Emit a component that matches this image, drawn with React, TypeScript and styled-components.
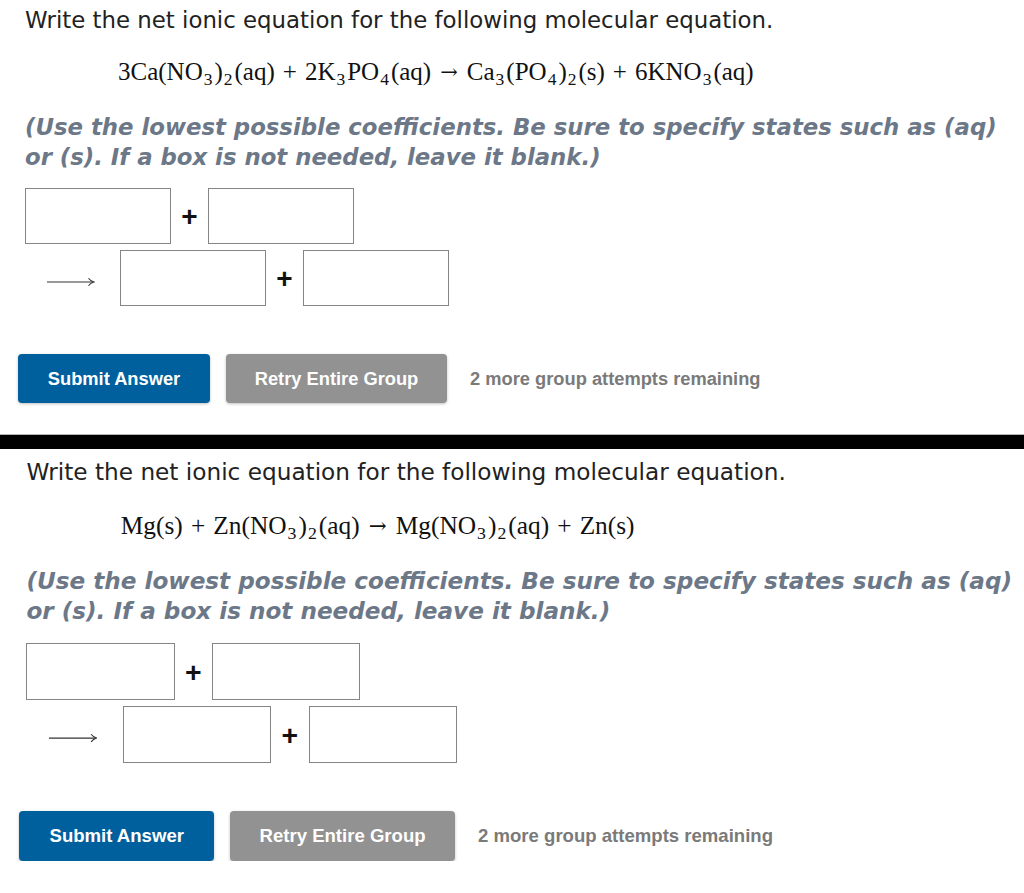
import React from "react";
import styled, { createGlobalStyle } from "styled-components";

const Global = createGlobalStyle`
  html, body { margin: 0; padding: 0; background: #ffffff; }
  body { font-family: "DejaVu Sans", Verdana, sans-serif; color: #222; }
`;

const Page = styled.div`
  width: 1024px;
  display: flex;
  flex-direction: column;
`;

const Section = styled.section<{ $zoom: number; $padTop: number; $padLeft: number }>`
  zoom: ${(p) => p.$zoom};
  padding: ${(p) => p.$padTop}px 0 0 ${(p) => p.$padLeft}px;
  display: flex;
  flex-direction: column;
`;

const Prompt = styled.div`
  font-family: "DejaVu Sans", Verdana, sans-serif;
  font-size: 22.85px;
  line-height: 28px;
  color: #222;
  white-space: nowrap;
`;

const Equation = styled.div`
  margin-top: 23px;
  height: 30px;
  padding-left: 93px;
  font-family: "Liberation Serif", "Times New Roman", serif;
  font-size: 25px;
  line-height: 30px;
  color: #111;
  white-space: nowrap;
`;

const Sub = styled.sub`
  font-size: 0.7em;
  line-height: 0;
  vertical-align: -0.28em;
  margin: 0 2px 0 1px;
`;

const Op = styled.span`
  margin: 0 8px;
`;

const Rel = styled.span`
  margin: 0 9px;
  font-family: "DejaVu Serif", serif;
  font-size: 21px;
  position: relative;
  top: -1px;
`;

const Instructions = styled.div`
  margin-top: 25px;
  font-family: "DejaVu Sans", Verdana, sans-serif;
  font-weight: bold;
  font-style: italic;
  font-size: 22.8px;
  line-height: 30px;
  color: #6c7888;
  width: 995px;
`;

const Answer = styled.div`
  margin-top: 16px;
  display: flex;
  flex-direction: column;
  gap: 6px;
`;

const BoxRow = styled.div<{ $indent: number }>`
  display: flex;
  align-items: center;
  padding-left: ${(p) => p.$indent}px;
`;

const InputBox = styled.div`
  width: 144px;
  height: 54px;
  border: 1px solid #858585;
  background: #fff;
`;

const Plus = styled.span`
  width: 37px;
  text-align: center;
  font-family: "Liberation Sans", Arial, sans-serif;
  font-weight: bold;
  font-size: 28px;
  line-height: 28px;
  color: #111;
  padding-top: 2px;
`;

const ArrowWrap = styled.span`
  width: 48px;
  height: 12px;
  margin-right: 25px;
  display: flex;
  align-items: center;
  margin-top: 8px;
`;

const Actions = styled.div`
  margin-top: 48px;
  margin-left: -7px;
  display: flex;
  align-items: center;
  gap: 16px;
`;

const Button = styled.button<{ $variant: "primary" | "secondary"; $width: number }>`
  width: ${(p) => p.$width}px;
  height: 49px;
  border: none;
  border-radius: 4px;
  background: ${(p) => (p.$variant === "primary" ? "#00609e" : "#929292")};
  color: #ffffff;
  font-family: "Liberation Sans", Arial, sans-serif;
  font-weight: bold;
  font-size: 18.3px;
  box-shadow: 0 1px 3px rgba(0, 0, 0, 0.25);
  padding: 0;
  cursor: pointer;
`;

const Remaining = styled.span`
  margin-left: 7px;
  font-family: "Liberation Sans", Arial, sans-serif;
  font-weight: bold;
  font-size: 18.3px;
  color: #7a7a7a;
`;

const Divider = styled.div`
  margin-top: 31px;
  height: 14px;
  background: #000;
  border-top: 1px solid #b5b5b5;
`;

const LongArrow = () => (
  <svg width="48" height="12" viewBox="0 0 48 12">
    <line x1="0" y1="6" x2="46" y2="6" stroke="#333" strokeWidth="1.2" />
    <path d="M41.5 2.2 Q43.5 5 47 6 Q43.5 7 41.5 9.8" fill="none" stroke="#333" strokeWidth="1.1" />
  </svg>
);

type Part = { t: string; sub?: boolean } | { op: string } | { rel: string };

const renderEq = (parts: Part[]) =>
  parts.map((p, i) =>
    "op" in p ? (
      <Op key={i}>{p.op}</Op>
    ) : "rel" in p ? (
      <Rel key={i}>{p.rel}</Rel>
    ) : p.sub ? (
      <Sub key={i}>{p.t}</Sub>
    ) : (
      <span key={i}>{p.t}</span>
    )
  );

const eq1: Part[] = [
  { t: "3Ca(NO" }, { t: "3", sub: true }, { t: ")" }, { t: "2", sub: true }, { t: "(aq)" },
  { op: "+" },
  { t: "2K" }, { t: "3", sub: true }, { t: "PO" }, { t: "4", sub: true }, { t: "(aq)" },
  { rel: "→" },
  { t: "Ca" }, { t: "3", sub: true }, { t: "(PO" }, { t: "4", sub: true }, { t: ")" }, { t: "2", sub: true }, { t: "(s)" },
  { op: "+" },
  { t: "6KNO" }, { t: "3", sub: true }, { t: "(aq)" },
];

const eq2: Part[] = [
  { t: "Mg(s)" },
  { op: "+" },
  { t: "Zn(NO" }, { t: "3", sub: true }, { t: ")" }, { t: "2", sub: true }, { t: "(aq)" },
  { rel: "→" },
  { t: "Mg(NO" }, { t: "3", sub: true }, { t: ")" }, { t: "2", sub: true }, { t: "(aq)" },
  { op: "+" },
  { t: "Zn(s)" },
];

const Question = ({
  eq,
  zoom,
  padTop,
  padLeft,
}: {
  eq: Part[];
  zoom: number;
  padTop: number;
  padLeft: number;
}) => (
  <Section $zoom={zoom} $padTop={padTop} $padLeft={padLeft}>
    <Prompt>Write the net ionic equation for the following molecular equation.</Prompt>
    <Equation>{renderEq(eq)}</Equation>
    <Instructions>
      (Use the lowest possible coefficients. Be sure to specify states such as (aq) or (s). If a
      box is not needed, leave it blank.)
    </Instructions>
    <Answer>
      <BoxRow $indent={0}>
        <InputBox />
        <Plus>+</Plus>
        <InputBox />
      </BoxRow>
      <BoxRow $indent={22}>
        <ArrowWrap>
          <LongArrow />
        </ArrowWrap>
        <InputBox />
        <Plus>+</Plus>
        <InputBox />
      </BoxRow>
    </Answer>
    <Actions>
      <Button $variant="primary" $width={192}>Submit Answer</Button>
      <Button $variant="secondary" $width={221}>Retry Entire Group</Button>
      <Remaining>2 more group attempts remaining</Remaining>
    </Actions>
  </Section>
);

export default function App() {
  return (
    <Page>
      <Global />
      <Question eq={eq1} zoom={1} padTop={6} padLeft={25} />
      <Divider />
      <Question eq={eq2} zoom={1.015} padTop={9} padLeft={26} />
    </Page>
  );
}
